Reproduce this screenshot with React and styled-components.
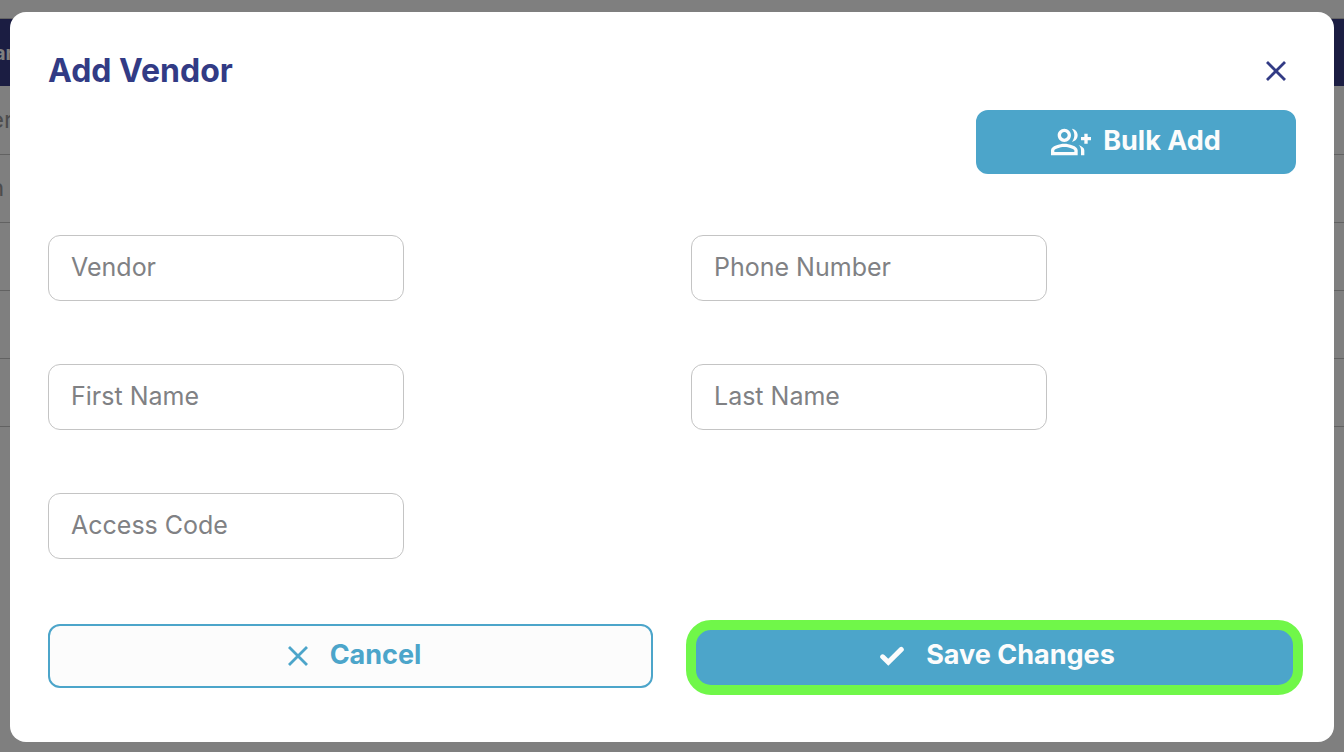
import React from 'react'
import styled, { createGlobalStyle } from 'styled-components'
import { MdOutlineGroupAdd } from 'react-icons/md'

const GlobalStyle = createGlobalStyle`
  * {
    box-sizing: border-box;
  }
  body {
    margin: 0;
    background-color: #ffffff;
    font-family: Inter, "Liberation Sans", sans-serif;
    overflow: hidden;
  }
  button, input {
    font-family: inherit;
  }
`

const Page = styled.main`
  padding-top: 18px;
  overflow: hidden;
`

const VendorTable = styled.table`
  min-width: calc(100% + 10px);
  margin-left: -10px;
  border-spacing: 0;
  text-align: left;

  th {
    height: 68px;
    padding: 0 0 0 4px;
    border-top: 1px solid #c8c8c8;
    background-color: #363b84;
    color: #ffffff;
    font-size: 20px;
    font-weight: 700;
  }
  td {
    height: 68px;
    padding: 0 0 3px;
    border-top: 1px solid #c4c4c4;
    color: #98989a;
    font-size: 24px;
  }
  tr:first-child td {
    border-top-color: transparent;
  }
`

const Overlay = styled.div`
  position: fixed;
  inset: 0;
  display: flex;
  padding: 12px 10px 10px;
  background-color: rgba(0, 0, 0, 0.5);
`

const Modal = styled.section`
  flex: 1;
  display: flex;
  flex-direction: column;
  padding: 38px;
  border-radius: 16px;
  background-color: #ffffff;
`

const Header = styled.header`
  display: flex;
  justify-content: space-between;
  align-items: center;
  height: 42px;
`

const Title = styled.h1`
  margin: 0;
  color: #323b85;
  font-size: 32px;
  line-height: 42px;
  font-weight: 700;
`

const CloseButton = styled.button`
  display: flex;
  justify-content: center;
  align-items: center;
  width: 40px;
  height: 40px;
  padding: 0;
  border: none;
  background: none;
  color: #323b85;
  cursor: pointer;
`

const Button = styled.button`
  display: flex;
  justify-content: center;
  align-items: center;
  gap: 22px;
  height: 64px;
  padding: 0 0 0 8px;
  border: 2px solid #4ca5ca;
  border-radius: 12px;
  background-color: ${({ $outlined }) => ($outlined ? '#fcfcfc' : '#4ca5ca')};
  color: ${({ $outlined }) => ($outlined ? '#4ca5ca' : '#fcfcfc')};
  font-size: 27px;
  line-height: 32px;
  font-weight: 700;
  cursor: pointer;
`

const BulkButton = styled(Button)`
  align-self: flex-end;
  gap: 12px;
  width: 320px;
  margin-top: 18px;
  padding-left: 0;
`

const SaveButton = styled(Button)`
  position: relative;

  &::after {
    content: '';
    position: absolute;
    inset: -6px -9px -9px -7px;
    border: 10px solid #70f749;
    border-radius: 25px;
  }
`

const Label = styled.span`
  padding-bottom: 2px;
`

const Form = styled.form`
  display: flex;
  flex-direction: column;
  gap: 65px;
  margin-top: 61px;
`

const Fields = styled.div`
  display: grid;
  grid-template-columns: 1fr 1fr;
  gap: 63px 38px;
`

const Input = styled.input`
  width: 356px;
  max-width: 100%;
  height: 66px;
  padding: 0 22px 2px;
  border: 1px solid #c4c4c4;
  border-radius: 12px;
  background-color: #ffffff;
  color: #323b85;
  font-size: 25px;

  &::placeholder {
    color: #808184;
    opacity: 1;
  }
`

const Actions = styled.div`
  display: grid;
  grid-template-columns: 1fr 1fr;
  gap: 38px;
`

const CrossIcon = () => (
  <svg width="20" height="20" viewBox="0 0 20 20" fill="none" stroke="currentColor" strokeWidth="2.8" aria-hidden="true">
    <path d="M1 1L19 19M19 1L1 19" />
  </svg>
)

const CheckIcon = () => (
  <svg width="24" height="20" viewBox="0 0 24 20" fill="none" stroke="currentColor" strokeWidth="5" strokeLinecap="round" aria-hidden="true">
    <path d="M2.7 10.8L8.3 16.2L21.3 3.4" />
  </svg>
)

const fields = ['Vendor', 'Phone Number', 'First Name', 'Last Name', 'Access Code']

export default function App() {
  return (
    <>
      <GlobalStyle />
      <Page>
        <VendorTable>
          <thead>
            <tr><th>ar</th></tr>
          </thead>
          <tbody>
            <tr><td>er</td></tr>
            <tr><td>n</td></tr>
            <tr><td /></tr>
            <tr><td /></tr>
            <tr><td /></tr>
            <tr><td /></tr>
          </tbody>
        </VendorTable>
      </Page>
      <Overlay>
        <Modal role="dialog" aria-modal="true" aria-labelledby="modal-title">
          <Header>
            <Title id="modal-title">Add Vendor</Title>
            <CloseButton type="button" aria-label="Close">
              <CrossIcon />
            </CloseButton>
          </Header>
          <BulkButton type="button">
            <MdOutlineGroupAdd size={40} aria-hidden="true" />
            <Label>Bulk Add</Label>
          </BulkButton>
          <Form onSubmit={(e) => e.preventDefault()}>
            <Fields>
              {fields.map((name) => (
                <Input key={name} type="text" placeholder={name} aria-label={name} />
              ))}
            </Fields>
            <Actions>
              <Button type="button" $outlined>
                <CrossIcon />
                <Label>Cancel</Label>
              </Button>
              <SaveButton type="submit">
                <CheckIcon />
                <Label>Save Changes</Label>
              </SaveButton>
            </Actions>
          </Form>
        </Modal>
      </Overlay>
    </>
  )
}
